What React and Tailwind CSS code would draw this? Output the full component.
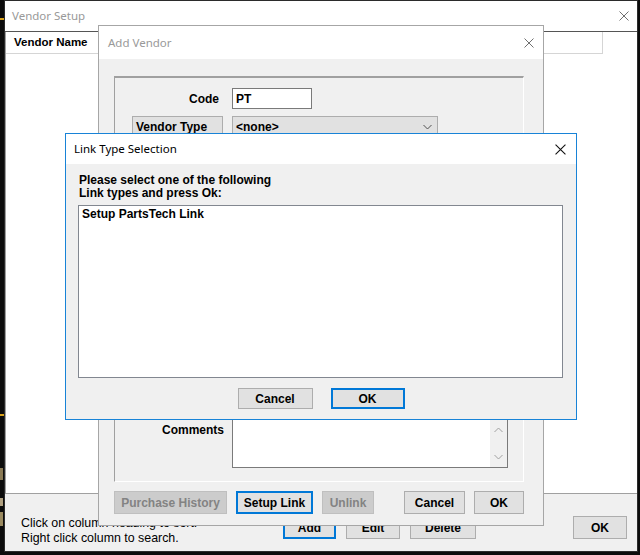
import React from "react";

function XIcon({ size = 10, color = "#000" }) {
  return (
    <svg width={size} height={size} viewBox="0 0 10 10" className="block">
      <path d="M0.5 0.5 L9.5 9.5 M9.5 0.5 L0.5 9.5" stroke={color} strokeWidth="1" fill="none" />
    </svg>
  );
}

function Chevron({ up = false, color = "#606060" }) {
  return (
    <svg width="9" height="6" viewBox="0 0 9 6" className="block">
      <path d={up ? "M0.5 5 L4.5 1 L8.5 5" : "M0.5 1 L4.5 5 L8.5 1"} stroke={color} strokeWidth="1" fill="none" />
    </svg>
  );
}

function Btn({ children, className = "", variant = "normal" }) {
  const v =
    variant === "focus"
      ? "border-2 border-[#0078d7] bg-[#e1e1e1] text-black"
      : variant === "disabled"
      ? "border border-[#bfbfbf] bg-[#cccccc] text-[#838383]"
      : "border border-[#adadad] bg-[#e1e1e1] text-black";
  return (
    <div className={`flex items-center justify-center text-[12px] font-bold leading-none ${v} ${className}`}>
      {children}
    </div>
  );
}

export default function App() {
  return (
    <div className="relative w-[640px] h-[555px] bg-[#0c0c0c] overflow-hidden font-['Liberation_Sans',Arial,sans-serif] text-black">
      {/* desktop glimpses */}
      <div className="absolute left-0 top-[18px] w-[4px] h-[2px] bg-[#d9a21b]" />
      <div className="absolute left-0 top-[414px] w-[4px] h-[2px] bg-[#d9a21b]" />
      <div className="absolute left-0 top-[468px] w-[3px] h-[12px] bg-[#8a7a55]" />
      <div className="absolute left-0 top-[498px] w-[3px] h-[8px] bg-[#b0a080]" />
      <div className="absolute left-0 top-[512px] w-[3px] h-[14px] bg-[#9a8a60]" />

      {/* Vendor Setup window */}
      <div className="absolute left-[4px] top-0 w-[634px] h-[552px] border border-[#2b2b2b] bg-white flex flex-col">
        <div className="h-[30px] flex items-center justify-between pl-[7px] pr-[8px] bg-white">
          <span className="font-['Noto_Sans',sans-serif] text-[11.5px] text-[#999999]">Vendor Setup</span>
          <XIcon size={10} color="#707070" />
        </div>
        <div className="h-px bg-[#555555]" />
        <div className="flex-1 bg-white border-l border-[#a0a0a0] flex flex-col">
          <div className="flex h-[22px]">
            <div className="w-[95px] border-r border-b border-[#d5d5d5] flex items-center pl-[8px] text-[11.5px] font-bold">
              Vendor Name
            </div>
            <div className="w-[502px] border-r border-b border-[#d5d5d5]" />
          </div>
        </div>
        <div className="h-[58px] border-t border-[#a0a0a0] bg-[#f0f0f0] flex pl-[16px] pr-[10px]">
          <div className="pt-[22px] w-[262px] text-[12.4px] leading-[15px]">
            <div>Click on column heading to sort.</div>
            <div>Right click column to search.</div>
          </div>
          <div className="pt-[22px] flex gap-[10px]">
            <Btn variant="focus" className="w-[53px] h-[23px]">Add</Btn>
            <Btn className="w-[54px] h-[23px]">Edit</Btn>
            <Btn className="w-[66px] h-[23px]">Delete</Btn>
          </div>
          <div className="flex-1" />
          <div className="pt-[22px]">
            <Btn className="w-[54px] h-[23px]">OK</Btn>
          </div>
        </div>
      </div>

      {/* Add Vendor window */}
      <div className="absolute left-[98px] top-[25px] w-[446px] h-[501px] border border-[#a6a6a6] bg-[#f0f0f0] flex flex-col">
        <div className="h-[33px] bg-white flex items-center justify-between pl-[9px] pr-[9px]">
          <span className="font-['Noto_Sans',sans-serif] text-[11.5px] text-[#999999]">Add Vendor</span>
          <XIcon size={10} color="#707070" />
        </div>
        <div className="flex flex-col px-[15px] pt-[17px]">
          <div className="w-[410px] h-[406px] border-t-2 border-l border-t-[#a0a0a0] border-l-[#a0a0a0] border-r border-b border-r-white border-b-white flex flex-col">
            <div className="flex items-center mt-[10px]">
              <div className="w-[104px] text-right text-[12px] font-bold">Code</div>
              <div className="ml-[13px] w-[80px] h-[21px] bg-white border border-[#7a7a7a] flex items-center pl-[3px] text-[12px] font-bold">
                PT
              </div>
            </div>
            <div className="flex items-start mt-[7px]">
              <div className="ml-[17px] w-[91px] h-[22px] bg-[#e1e1e1] border border-[#adadad] flex items-center pl-[3px] text-[12px] font-bold">
                Vendor Type
              </div>
              <div className="ml-[9px] w-[206px] h-[22px] bg-[#e1e1e1] border border-[#adadad] flex items-center justify-between pl-[3px] pr-[5px] text-[12px] font-bold">
                <span>&lt;none&gt;</span>
                <Chevron color="#505050" />
              </div>
            </div>
            <div className="flex items-start mt-[281px]">
              <div className="w-[109px] text-right text-[12px] font-bold pt-[2px]">Comments</div>
              <div className="ml-[8px] w-[276px] h-[49px] bg-white border border-[#7a7a7a] flex justify-end">
                <div className="w-[17px] h-full bg-[#f0f0f0] flex flex-col items-center justify-between py-[7px]">
                  <Chevron up color="#a0a0a0" />
                  <Chevron color="#a0a0a0" />
                </div>
              </div>
            </div>
          </div>
          <div className="flex mt-[9px] gap-[9px]">
            <Btn variant="disabled" className="w-[113px] h-[23px]">Purchase History</Btn>
            <Btn variant="focus" className="w-[77px] h-[23px]">Setup Link</Btn>
            <Btn variant="disabled" className="w-[52px] h-[23px]">Unlink</Btn>
            <Btn className="w-[61px] h-[23px] ml-[21px]">Cancel</Btn>
            <Btn className="w-[50px] h-[23px]">OK</Btn>
          </div>
        </div>
      </div>

      {/* Link Type Selection dialog */}
      <div className="absolute left-[65px] top-[133px] w-[512px] h-[287px] border border-[#1883d7] bg-[#f0f0f0] flex flex-col">
        <div className="h-[30px] bg-white flex items-center justify-between pl-[8px] pr-[10px]">
          <span className="font-['Noto_Sans',sans-serif] text-[11.5px] text-black">Link Type Selection</span>
          <XIcon size={11} color="#111111" />
        </div>
        <div className="flex flex-col pl-[12px] pt-[10px]">
          <div className="pl-[1px] text-[12px] font-bold leading-[13px]">
            <div>Please select one of the following</div>
            <div>Link types and press Ok:</div>
          </div>
          <div className="mt-[5px] w-[485px] h-[173px] bg-white border border-[#828790] pl-[3px] pt-[1px] text-[12px] font-bold leading-[14px]">
            Setup PartsTech Link
          </div>
          <div className="mt-[10px] flex justify-center gap-[18px] pr-[12px]">
            <Btn className="w-[75px] h-[21px]">Cancel</Btn>
            <Btn variant="focus" className="w-[74px] h-[21px]">OK</Btn>
          </div>
        </div>
      </div>
    </div>
  );
}
